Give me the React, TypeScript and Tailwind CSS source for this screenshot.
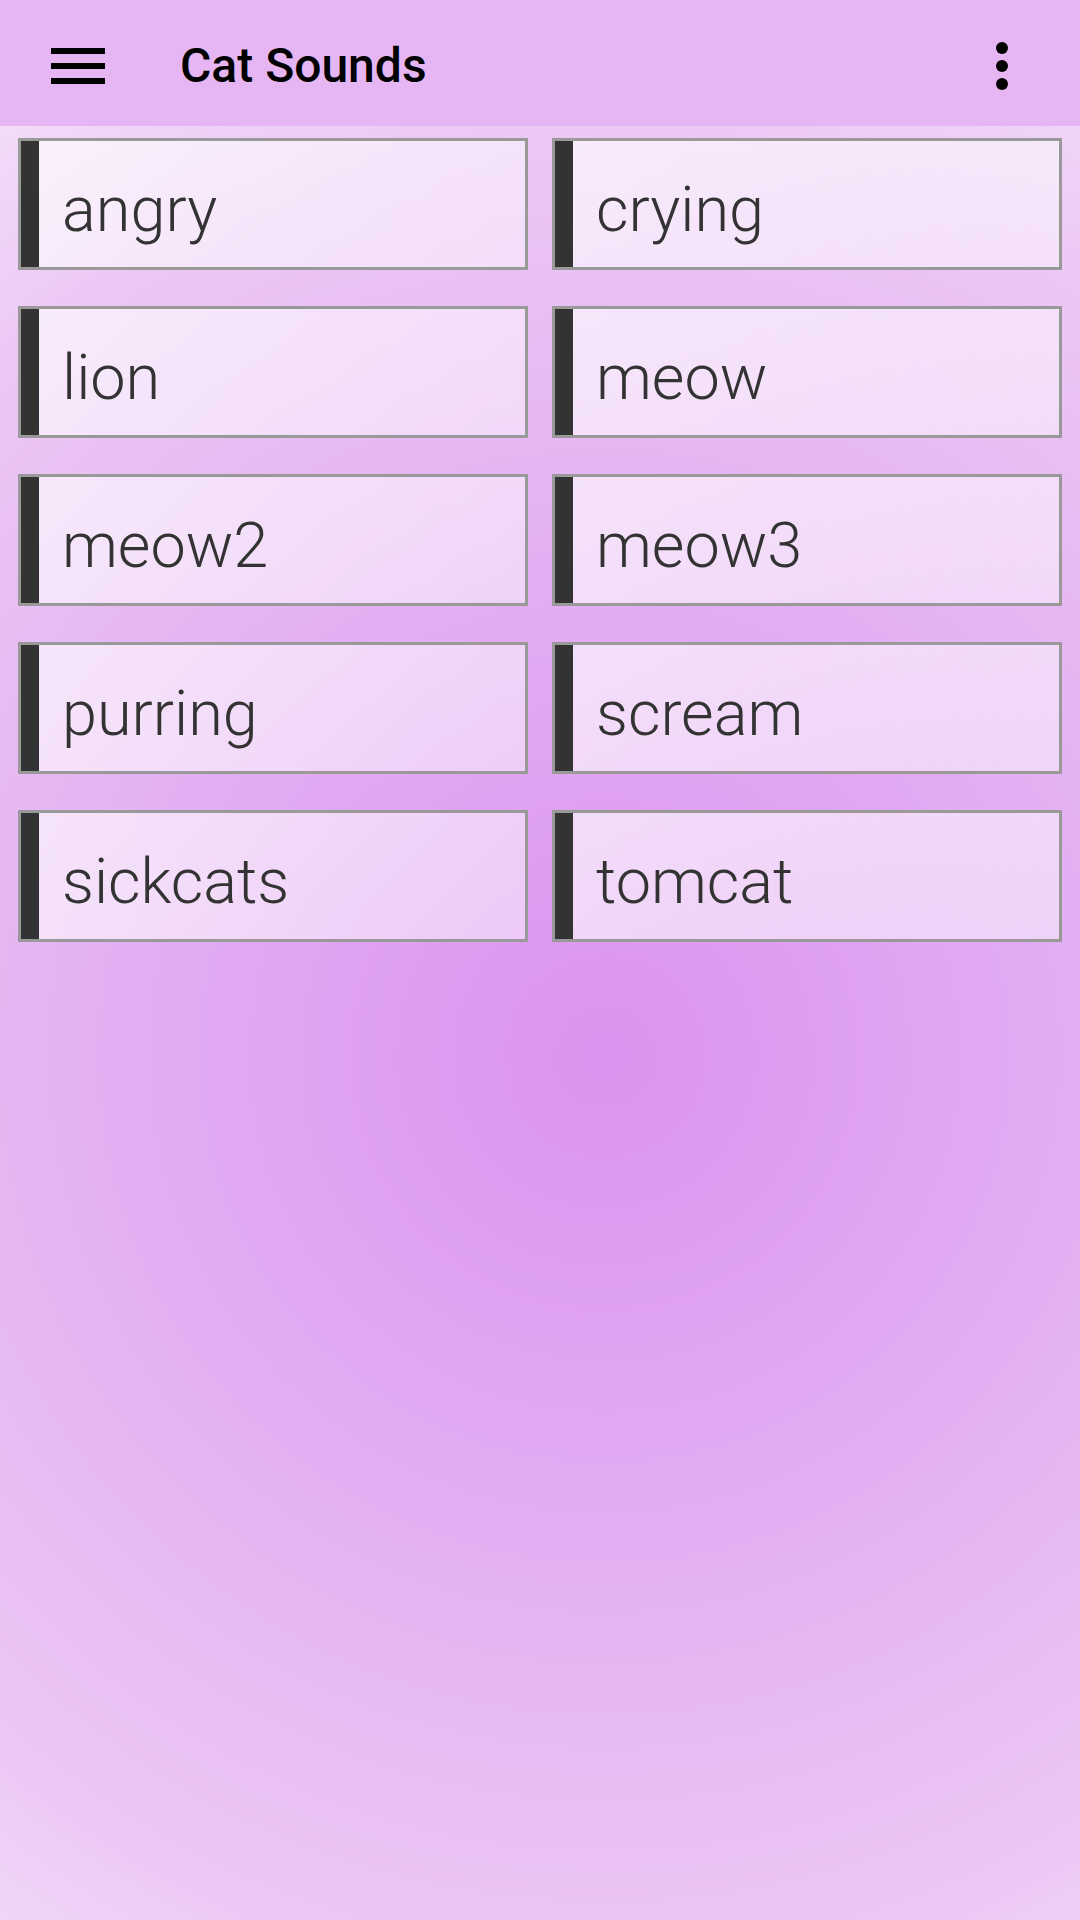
import React from "react";

const sounds = [
  "angry",
  "crying",
  "lion",
  "meow",
  "meow2",
  "meow3",
  "purring",
  "scream",
  "sickcats",
  "tomcat",
];

function MenuIcon() {
  return (
    <svg width="54" height="36" viewBox="0 0 54 36" fill="#000">
      <rect x="0" y="0" width="54" height="6" />
      <rect x="0" y="15" width="54" height="6" />
      <rect x="0" y="30" width="54" height="6" />
    </svg>
  );
}

function MoreIcon() {
  return (
    <svg width="12" height="48" viewBox="0 0 12 48" fill="#000">
      <circle cx="6" cy="6" r="6" />
      <circle cx="6" cy="24" r="6" />
      <circle cx="6" cy="42" r="6" />
    </svg>
  );
}

function SoundButton({ label }: { label: string }) {
  return (
    <button className="flex h-[132px] items-start border-[3px] border-[#999999] bg-[linear-gradient(135deg,rgba(255,255,255,0.64),rgba(255,255,255,0.46))] text-left">
      <span className="h-full w-[18px] shrink-0 bg-[#333333]" />
      <span className="pl-[23px] pt-[37px] text-[63px] font-light leading-[63px] text-[#333333]">
        {label}
      </span>
    </button>
  );
}

export default function App() {
  return (
    <main className="min-h-[1920px] w-[1080px] bg-[radial-gradient(circle_at_56%_55%,#da94ee_0%,#e0a4f1_25%,#e6b6f3_50%,#ecc8f5_75%,#f6e6fb_100%)] font-['Roboto',sans-serif]">
      <header className="flex h-[126px] items-center bg-[#e6b6f4] pt-[6px]">
        <div className="ml-[51px]">
          <MenuIcon />
        </div>
        <h1 className="ml-[75px] text-[48px] font-medium leading-[48px] text-black">
          Cat Sounds
        </h1>
        <div className="ml-auto mr-[72px]">
          <MoreIcon />
        </div>
      </header>

      <section className="grid grid-cols-2 gap-x-[24px] gap-y-[36px] px-[18px] pt-[12px]">
        {sounds.map((sound) => (
          <SoundButton key={sound} label={sound} />
        ))}
      </section>
    </main>
  );
}
